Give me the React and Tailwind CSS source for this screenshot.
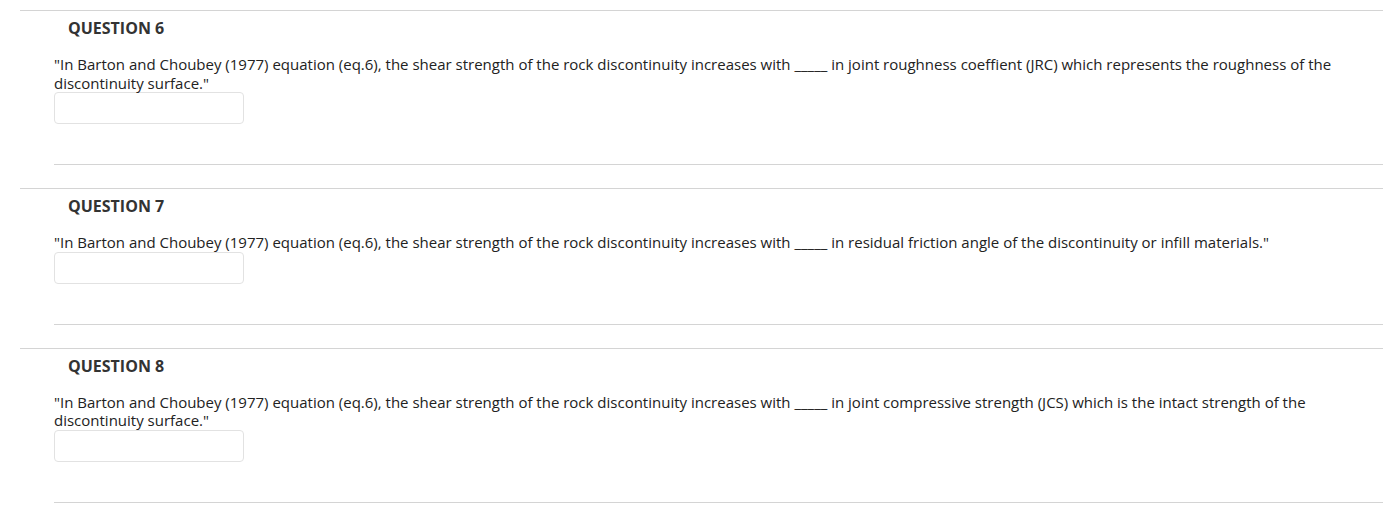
// Quiz page: three short-answer questions, each with a text box.

const QUESTIONS = [
  {
    n: 6,
    text: '"In Barton and Choubey (1977) equation (eq.6), the shear strength of the rock discontinuity increases with _____ in joint roughness coeffient (JRC) which represents the roughness of the discontinuity surface."',
  },
  {
    n: 7,
    text: '"In Barton and Choubey (1977) equation (eq.6), the shear strength of the rock discontinuity increases with _____ in residual friction angle of the discontinuity or infill materials."',
  },
  {
    n: 8,
    text: '"In Barton and Choubey (1977) equation (eq.6), the shear strength of the rock discontinuity increases with _____ in joint compressive strength (JCS) which is the intact strength of the discontinuity surface."',
  },
]

export default function App() {
  return (
    <div className="min-h-screen bg-white pt-[10px] text-[#222]" style={{ fontFamily: '"Open Sans", "Liberation Sans", sans-serif' }}>
      {QUESTIONS.map(q => (
        <div key={q.n} className="ml-[20px] mb-[23px] border-t border-[#d4d4d4] pt-[6px]">
          {/* Titre */}
          <h3 className="pl-[48px] text-[16px] leading-[22px] font-bold text-[#333]">
            QUESTION {q.n}
          </h3>

          <div className="pl-[34px] mt-[16px]">
            <p className="text-[15px] leading-[18.5px] pr-[20px]">{q.text}</p>
            <input
              type="text"
              className="block w-[190px] h-[32px] border border-[#e2e2e2] rounded-[4px] bg-white outline-none"
            />
            <div className="mt-[40px] border-t border-[#d4d4d4]" />
          </div>
        </div>
      ))}
    </div>
  )
}
